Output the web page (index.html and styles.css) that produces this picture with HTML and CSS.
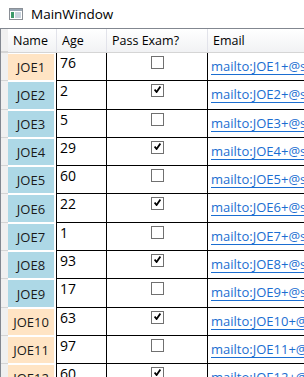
FILE: index.html
```html
<!DOCTYPE html>
<html>
<head>
<meta charset="utf-8">
<link rel="stylesheet" href="styles.css">
</head>
<body>
<div class="window">
  <div class="titlebar">
    <svg class="appicon" width="14" height="12" viewBox="0 0 14 12">
      <rect x="0.5" y="0.5" width="13" height="11" fill="#fff" stroke="#8a8f96"/>
      <rect x="1" y="1" width="12" height="2" fill="#9aa7b4"/>
      <rect x="2" y="4" width="3" height="6" fill="#3c9a6a"/>
      <rect x="6" y="4" width="6" height="6" fill="#c9d4de"/>
    </svg>
    <span class="title">MainWindow</span>
  </div>
  <div class="grid">
    <div class="hrow">
      <div class="rh hcorner"></div>
      <div class="hc c-name">Name</div>
      <div class="hc c-age">Age</div>
      <div class="hc c-pass">Pass Exam?</div>
      <div class="hc c-email">Email</div>
    </div>
    <div class="row"><div class="rh"></div><div class="cell c-name"><span class="tag orange">JOE1</span></div><div class="cell c-age">76</div><div class="cell c-pass"><span class="cb"></span></div><div class="cell c-email"><a class="link">mailto:JOE1+@somewhere.com</a></div></div>
    <div class="row"><div class="rh"></div><div class="cell c-name"><span class="tag blue">JOE2</span></div><div class="cell c-age">2</div><div class="cell c-pass"><span class="cb on"></span></div><div class="cell c-email"><a class="link">mailto:JOE2+@somewhere.com</a></div></div>
    <div class="row"><div class="rh"></div><div class="cell c-name"><span class="tag blue">JOE3</span></div><div class="cell c-age">5</div><div class="cell c-pass"><span class="cb"></span></div><div class="cell c-email"><a class="link">mailto:JOE3+@somewhere.com</a></div></div>
    <div class="row"><div class="rh"></div><div class="cell c-name"><span class="tag blue">JOE4</span></div><div class="cell c-age">29</div><div class="cell c-pass"><span class="cb on"></span></div><div class="cell c-email"><a class="link">mailto:JOE4+@somewhere.com</a></div></div>
    <div class="row"><div class="rh"></div><div class="cell c-name"><span class="tag blue">JOE5</span></div><div class="cell c-age">60</div><div class="cell c-pass"><span class="cb"></span></div><div class="cell c-email"><a class="link">mailto:JOE5+@somewhere.com</a></div></div>
    <div class="row"><div class="rh"></div><div class="cell c-name"><span class="tag blue">JOE6</span></div><div class="cell c-age">22</div><div class="cell c-pass"><span class="cb on"></span></div><div class="cell c-email"><a class="link">mailto:JOE6+@somewhere.com</a></div></div>
    <div class="row"><div class="rh"></div><div class="cell c-name"><span class="tag blue">JOE7</span></div><div class="cell c-age">1</div><div class="cell c-pass"><span class="cb"></span></div><div class="cell c-email"><a class="link">mailto:JOE7+@somewhere.com</a></div></div>
    <div class="row"><div class="rh"></div><div class="cell c-name"><span class="tag blue">JOE8</span></div><div class="cell c-age">93</div><div class="cell c-pass"><span class="cb on"></span></div><div class="cell c-email"><a class="link">mailto:JOE8+@somewhere.com</a></div></div>
    <div class="row"><div class="rh"></div><div class="cell c-name"><span class="tag blue">JOE9</span></div><div class="cell c-age">17</div><div class="cell c-pass"><span class="cb"></span></div><div class="cell c-email"><a class="link">mailto:JOE9+@somewhere.com</a></div></div>
    <div class="row"><div class="rh"></div><div class="cell c-name"><span class="tag orange">JOE10</span></div><div class="cell c-age">63</div><div class="cell c-pass"><span class="cb on"></span></div><div class="cell c-email"><a class="link">mailto:JOE10+@somewhere.com</a></div></div>
    <div class="row"><div class="rh"></div><div class="cell c-name"><span class="tag orange">JOE11</span></div><div class="cell c-age">97</div><div class="cell c-pass"><span class="cb"></span></div><div class="cell c-email"><a class="link">mailto:JOE11+@somewhere.com</a></div></div>
    <div class="row"><div class="rh"></div><div class="cell c-name"><span class="tag orange">JOE12</span></div><div class="cell c-age">60</div><div class="cell c-pass"><span class="cb on"></span></div><div class="cell c-email"><a class="link">mailto:JOE12+@somewhere.com</a></div></div>
  </div>
</div>
</body>
</html>
```
FILE: styles.css
```css
html, body {
  margin: 0;
  padding: 0;
  background: #fff;
}
body {
  width: 304px;
  height: 377px;
  overflow: hidden;
  font-family: "Open Sans", "Noto Sans CJK SC", sans-serif;
  color: #000;
}
.window {
  width: 304px;
  height: 377px;
  overflow: hidden;
}
.titlebar {
  height: 28px;
  display: flex;
  align-items: center;
  padding-left: 9px;
  box-sizing: border-box;
}
.appicon {
  display: block;
  margin-right: 8px;
}
.title {
  font-size: 13.5px;
  color: #000;
}
.grid {
  border-left: 1px solid #828790;
  border-top: 1px solid #828790;
  width: 600px;
}
.hrow {
  display: flex;
  height: 24px;
  background: linear-gradient(#ffffff, #f1f2f4);
  border-bottom: 1px solid #d5d5d5;
  box-sizing: border-box;
}
.hc {
  font-size: 12.5px;
  display: flex;
  align-items: center;
  padding-left: 5px;
  box-sizing: border-box;
  border-right: 1px solid #e2e3ea;
}
.hcorner {
  background: linear-gradient(#ffffff, #f1f2f4);
}
.rh {
  width: 7px;
  flex: none;
  background: #f0f0f0;
  border-bottom: 1px solid #d5d5d5;
  box-sizing: border-box;
}
.c-name { width: 49px; flex: none; }
.c-age { width: 50px; flex: none; }
.c-pass { width: 101px; flex: none; }
.c-email { width: 300px; flex: none; }
.row {
  display: flex;
  height: 28.3px;
}
.cell {
  box-sizing: border-box;
  border-bottom: 1px solid #000;
  border-right: 1px solid #000;
  font-size: 14px;
  white-space: nowrap;
  overflow: hidden;
}
.cell.c-name {
  border-bottom: none;
  padding: 1px 2px 1px 0;
}
.tag {
  display: flex;
  align-items: center;
  justify-content: center;
  height: 100%;
  font-size: 13px;
  color: #1a1a1a;
}
.orange { background: #ffe4c4; }
.blue { background: #add8e6; }
.cell.c-age {
  padding: 1px 0 0 3px;
  line-height: 18px;
}
.cell.c-pass {
  display: flex;
  justify-content: center;
  padding-top: 3px;
}
.cb {
  width: 11px;
  height: 11px;
  border: 1px solid #707070;
  background: #fff;
  position: relative;
}
.cb.on::after {
  content: "";
  position: absolute;
  left: 2px;
  top: 1px;
  width: 7px;
  height: 7px;
  background: no-repeat center/contain url("data:image/svg+xml;utf8,<svg xmlns='http://www.w3.org/2000/svg' viewBox='0 0 7 7'><path d='M0.6 3.6 L2.6 6 L6.4 0.6' fill='none' stroke='black' stroke-width='1.8'/></svg>");
}
.cell.c-email {
  border-right: none;
  padding: 3px 0 0 3px;
}
.link {
  color: #1b6ed1;
  text-decoration: underline;
  font-size: 13px;
  text-underline-offset: 3px;
}
```
